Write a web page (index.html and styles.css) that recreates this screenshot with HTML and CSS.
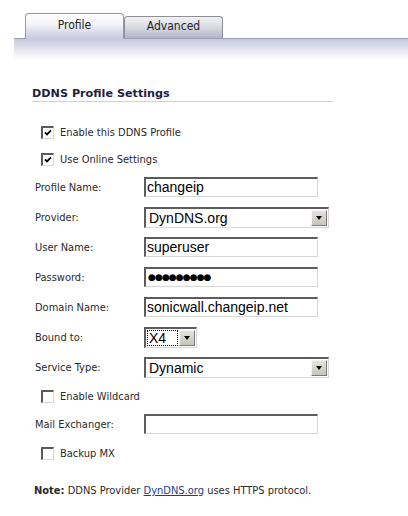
FILE: index.html
```html
<!DOCTYPE html>
<html>
<head>
<meta charset="utf-8">
<title>DDNS Profile</title>
<link rel="stylesheet" href="styles.css">
</head>
<body>
<div class="tabs">
  <div class="tab active">Profile</div>
  <div class="tab">Advanced</div>
</div>
<div class="band"></div>

<h2 class="section-title">DDNS Profile Settings</h2>

<div class="form">
  <div class="row check">
    <span class="cb"><svg viewBox="0 0 12 12" width="12" height="12"><path d="M2.3 5.3 L4.8 7.8 L9.6 2.8" fill="none" stroke="#000" stroke-width="2.2"/></svg></span>
    <span class="cb-label">Enable this DDNS Profile</span>
  </div>
  <div class="row check">
    <span class="cb"><svg viewBox="0 0 12 12" width="12" height="12"><path d="M2.3 5.3 L4.8 7.8 L9.6 2.8" fill="none" stroke="#000" stroke-width="2.2"/></svg></span>
    <span class="cb-label">Use Online Settings</span>
  </div>
  <div class="row">
    <span class="label">Profile Name:</span>
    <div class="field">changeip</div>
  </div>
  <div class="row">
    <span class="label">Provider:</span>
    <div class="select wide"><span class="select-text">DynDNS.org</span><span class="arrow"></span></div>
  </div>
  <div class="row">
    <span class="label">User Name:</span>
    <div class="field">superuser</div>
  </div>
  <div class="row">
    <span class="label">Password:</span>
    <div class="field password">●●●●●●●●●</div>
  </div>
  <div class="row">
    <span class="label">Domain Name:</span>
    <div class="field">sonicwall.changeip.net</div>
  </div>
  <div class="row">
    <span class="label">Bound to:</span>
    <div class="select small"><span class="select-text focus">X4</span><span class="arrow"></span></div>
  </div>
  <div class="row">
    <span class="label">Service Type:</span>
    <div class="select wide"><span class="select-text">Dynamic</span><span class="arrow"></span></div>
  </div>
  <div class="row check">
    <span class="cb"></span>
    <span class="cb-label">Enable Wildcard</span>
  </div>
  <div class="row">
    <span class="label">Mail Exchanger:</span>
    <div class="field"></div>
  </div>
  <div class="row check">
    <span class="cb"></span>
    <span class="cb-label">Backup MX</span>
  </div>
  <p class="note"><b>Note:</b> DDNS Provider <a href="#">DynDNS.org</a> uses HTTPS protocol.</p>
</div>
</body>
</html>
```
FILE: styles.css
```css
html, body {
  margin: 0;
  padding: 0;
  background: #fff;
}
body {
  font-family: "DejaVu Sans Condensed", "DejaVu Sans", sans-serif;
  font-size: 11px;
  color: #2a2a2a;
}

.tabs {
  display: flex;
  align-items: flex-end;
  margin: 13px 0 0 14px;
  padding-left: 11px;
  height: 25px;
  border-bottom: 1px solid #9d9fb2;
}
.tab {
  box-sizing: border-box;
  display: flex;
  align-items: center;
  justify-content: center;
  font-family: "DejaVu Sans Condensed", sans-serif;
  font-size: 12px;
  color: #222;
  border: 1px solid #9a9a9e;
  border-bottom: none;
  border-radius: 4px 4px 0 0;
}
.tab.active {
  width: 99px;
  height: 26px;
  margin-bottom: -1px;
  padding-bottom: 3px;
  background: linear-gradient(#ffffff 0%, #f4f4fa 40%, #c6c8df 100%);
}
.tab:not(.active) {
  width: 99px;
  height: 22px;
  padding-bottom: 3px;
  border-color: #8e8e94;
  background: linear-gradient(#f2f2f4 0%, #dcdce4 45%, #b3b5ca 100%);
}

.band {
  margin-left: 14px;
  height: 20px;
  background: linear-gradient(#c6c8df, #ffffff);
}

.section-title {
  margin: 28px 0 0 32px;
  width: 301px;
  font-family: "DejaVu Sans", sans-serif;
  font-weight: bold;
  font-size: 11.2px;
  line-height: 14px;
  color: #1e1e40;
  border-bottom: 1px solid #d2d2d2;
}

.form {
  margin: 17px 0 0 35px;
}

.row {
  display: flex;
  align-items: center;
  height: 30px;
}
.row.check {
  height: 26px;
  margin-top: 1px;
  padding-left: 6px;
}
.label {
  width: 109px;
  flex: none;
}

.cb {
  box-sizing: border-box;
  width: 13px;
  height: 13px;
  flex: none;
  background: #fff;
  border-style: solid;
  border-width: 2px 1px 1px 2px;
  border-color: #5a5a5a #d8d8d8 #d8d8d8 #5a5a5a;
  display: flex;
  align-items: center;
  justify-content: center;
}
.cb svg {
  display: block;
  width: 10px;
  height: 10px;
}
.cb-label {
  margin-left: 6px;
}

.field {
  box-sizing: border-box;
  width: 174px;
  height: 20px;
  border-style: solid;
  border-width: 2px 1px 1px 2px;
  border-color: #5c5c5c #d6d6d6 #d6d6d6 #5c5c5c;
  background: #fff;
  font-family: "Liberation Sans", Arial, sans-serif;
  font-size: 14px;
  line-height: 16px;
  color: #000;
  padding-left: 1px;
  white-space: nowrap;
  overflow: hidden;
}
.field.password {
  font-family: "DejaVu Sans", sans-serif;
  font-size: 9px;
  letter-spacing: -0.9px;
  padding-left: 2px;
}

.select {
  box-sizing: border-box;
  height: 21px;
  display: flex;
  align-items: stretch;
  border-style: solid;
  border-width: 2px 1px 1px 2px;
  border-color: #5c5c5c #d6d6d6 #d6d6d6 #5c5c5c;
  background: #fff;
  padding: 1px;
}
.select.wide { width: 185px; }
.select.small { width: 53px; }
.select-text {
  flex: 1;
  display: flex;
  align-items: center;
  padding-left: 2px;
  font-family: "Liberation Sans", Arial, sans-serif;
  font-size: 14px;
  color: #000;
}
.select-text.focus {
  box-sizing: border-box;
  border: 1px dotted #000;
  padding-left: 1px;
  margin-right: 1px;
}
.arrow {
  box-sizing: border-box;
  width: 16px;
  flex: none;
  display: flex;
  align-items: center;
  justify-content: center;
  background: linear-gradient(#e4e2dc, #c8c5bd);
  border-style: solid;
  border-width: 1px;
  border-color: #f4f4f4 #7a7a7a #7a7a7a #f4f4f4;
}
.arrow::after {
  content: "";
  width: 0;
  height: 0;
  border-left: 3.5px solid transparent;
  border-right: 3.5px solid transparent;
  border-top: 4px solid #000;
  margin-top: 1px;
}

.note {
  margin: 18px 0 0 -1px;
  line-height: 14px;
}
.note a {
  color: #1b3d8f;
  text-decoration: underline;
}
```
